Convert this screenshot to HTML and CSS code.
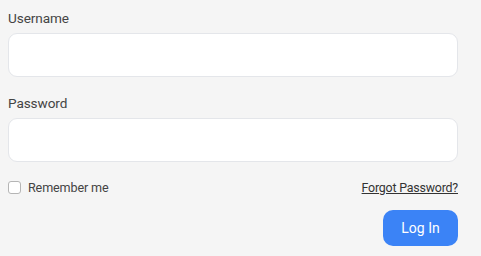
FILE: index.html
```html
<!DOCTYPE html>
<html lang="en">
<head>
    <meta charset="UTF-8">
    <meta name="viewport" content="width=device-width, initial-scale=1.0">
    <title>Login</title>
    <link rel="stylesheet" href="styles.css">
</head>
<body>
    <form class="login-form">
        <div class="field">
            <label class="field-label" for="username">Username</label>
            <input type="text" id="username" class="field-input">
        </div>

        <div class="field">
            <label class="field-label" for="password">Password</label>
            <input type="password" id="password" class="field-input">
        </div>

        <div class="options-row">
            <label class="remember">
                <input type="checkbox" class="remember-check">
                <span>Remember me</span>
            </label>
            <a href="#" class="forgot-link">Forgot Password?</a>
        </div>

        <div class="actions">
            <button type="button" class="login-btn">Log In</button>
        </div>
    </form>
</body>
</html>
```

FILE: styles.css
```css
:root {
    --bg-color: #f5f5f5;
    --text-color: #444;
    --border-color: #e4e6ea;
    --primary-color: #3b83f6;
}

* {
    margin: 0;
    padding: 0;
    box-sizing: border-box;
}

body {
    font-family: Roboto, "Liberation Sans", sans-serif;
    background-color: var(--bg-color);
    color: var(--text-color);
    padding: 8px;
}

.login-form {
    width: 450px;
    display: flex;
    flex-direction: column;
}

.field {
    display: flex;
    flex-direction: column;
    gap: 5px;
    margin-bottom: 16px;
}

.field-label {
    font-size: 13.6px;
    line-height: 20px;
    letter-spacing: -0.1px;
}

.field-input {
    height: 44px;
    background: white;
    border: 1px solid var(--border-color);
    border-radius: 9px;
    padding: 0 12px;
    font-size: 14px;
    outline: none;
}

.options-row {
    display: flex;
    justify-content: space-between;
    align-items: center;
    height: 18px;
}

.remember {
    display: flex;
    align-items: center;
    gap: 7px;
    font-size: 12.6px;
    letter-spacing: -0.15px;
}

.remember-check {
    appearance: none;
    width: 13px;
    height: 13px;
    border: 1px solid #b5b5b5;
    border-radius: 3px;
    background: white;
}

.forgot-link {
    font-size: 12.4px;
    letter-spacing: -0.2px;
    color: #333;
    text-decoration: underline;
}

.actions {
    display: flex;
    justify-content: flex-end;
    margin-top: 14px;
}

.login-btn {
    width: 75px;
    height: 36px;
    background: var(--primary-color);
    color: white;
    border: none;
    border-radius: 10px;
    font-family: inherit;
    font-size: 14px;
    cursor: pointer;
}
```
